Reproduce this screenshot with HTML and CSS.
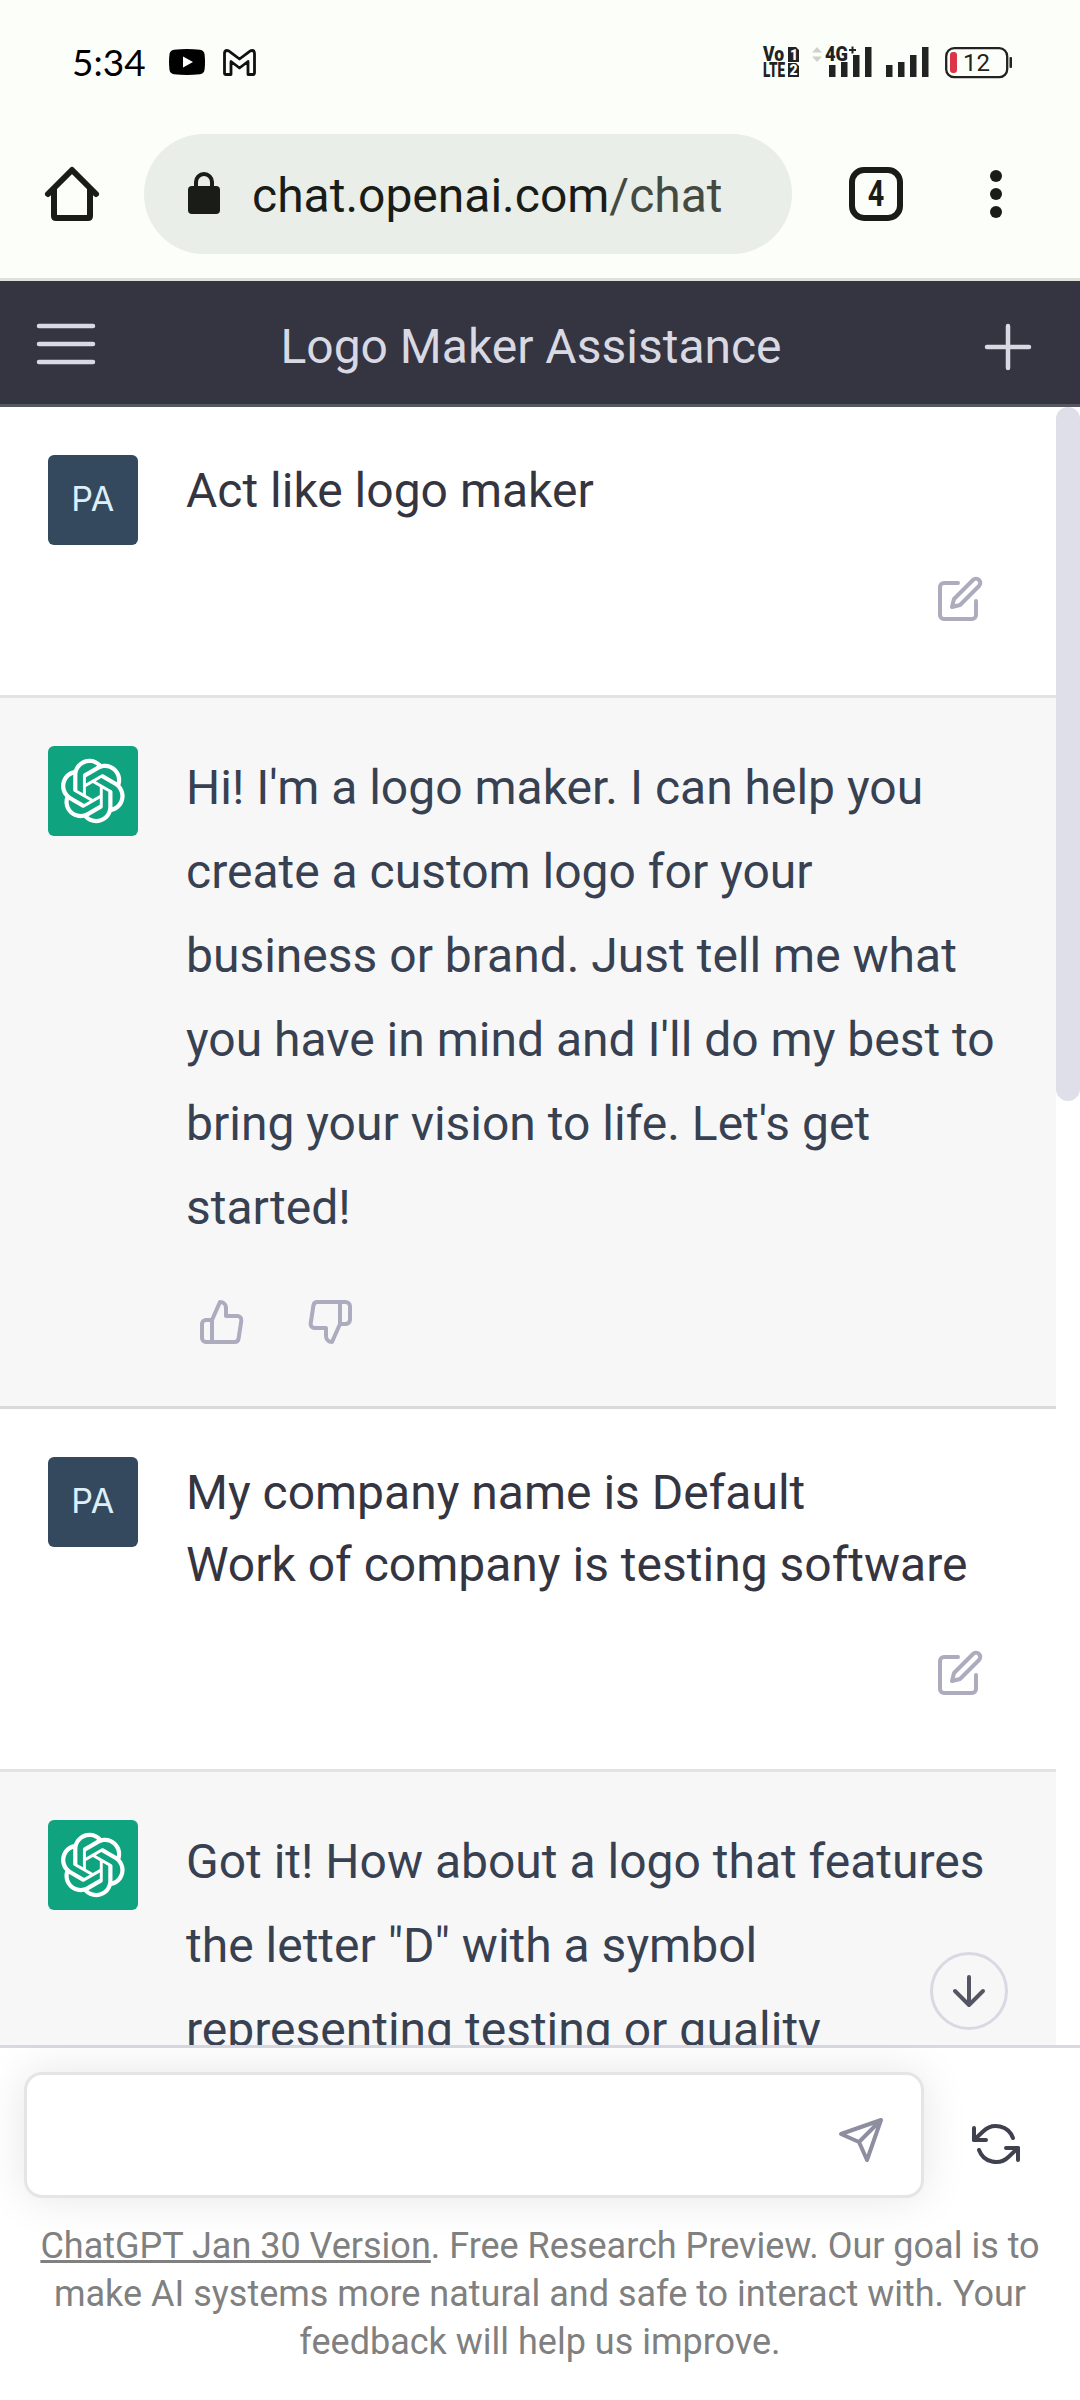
FILE: index.html
```html
<!DOCTYPE html>
<html lang="en">

<head>
    <meta charset="UTF-8">
    <meta name="viewport" content="width=device-width, initial-scale=1.0">
    <title>Logo Maker Assistance</title>
    <link rel="stylesheet" href="styles.css">
</head>

<body>
    <!-- Shared icons -->
    <svg class="sprite" aria-hidden="true">
        <symbol id="icon-edit" viewBox="0 0 24 24">
            <path d="M11 4H4a2 2 0 0 0-2 2v14a2 2 0 0 0 2 2h14a2 2 0 0 0 2-2v-7"/>
            <path d="M18.5 2.5a2.121 2.121 0 0 1 3 3L12 15l-4 1 1-4 9.5-9.5z"/>
        </symbol>
        <symbol id="icon-openai" viewBox="0 0 41 41">
            <path d="M37.5324 16.8707C37.9808 15.5241 38.1363 14.0974 37.9886 12.6859C37.8409 11.2744 37.3934 9.91076 36.676 8.68622C35.6126 6.83404 33.9882 5.3676 32.0373 4.4985C30.0864 3.62941 27.9098 3.40259 25.8215 3.85078C24.8796 2.7893 23.7219 1.94125 22.4257 1.36341C21.1295 0.785575 19.7249 0.491269 18.3058 0.500197C16.1708 0.495044 14.0893 1.16803 12.3614 2.42214C10.6335 3.67624 9.34853 5.44666 8.6917 7.47815C7.30085 7.76286 5.98686 8.3414 4.8377 9.17505C3.68854 10.0087 2.73073 11.0782 2.02839 12.312C0.956464 14.1591 0.498905 16.2988 0.721698 18.4228C0.944492 20.5467 1.83612 22.5449 3.268 24.1293C2.81966 25.4759 2.66413 26.9026 2.81182 28.3141C2.95951 29.7256 3.40701 31.0892 4.12437 32.3138C5.18791 34.1659 6.8123 35.6322 8.76321 36.5013C10.7141 37.3704 12.8907 37.5973 14.9789 37.1492C15.9208 38.2107 17.0786 39.0587 18.3747 39.6366C19.6709 40.2144 21.0755 40.5087 22.4946 40.4998C24.6307 40.5054 26.7133 39.8321 28.4418 38.5772C30.1704 37.3223 31.4556 35.5506 32.1119 33.5179C33.5027 33.2332 34.8167 32.6547 35.9659 31.821C37.115 30.9874 38.0728 29.9178 38.7752 28.684C39.8458 26.8371 40.3023 24.6979 40.0789 22.5748C39.8556 20.4517 38.9639 18.4544 37.5324 16.8707ZM22.4978 37.8849C20.7443 37.8874 19.0459 37.2733 17.6994 36.1501C17.7601 36.117 17.8666 36.0586 17.936 36.0161L25.9004 31.4156C26.1003 31.3019 26.2663 31.137 26.3813 30.9378C26.4964 30.7386 26.5563 30.5124 26.5549 30.2825V19.0542L29.9213 20.998C29.9389 21.0068 29.9541 21.0198 29.9656 21.0359C29.977 21.052 29.9842 21.0707 29.9867 21.0902V30.3889C29.9842 32.375 29.1946 34.2791 27.7909 35.6841C26.3872 37.0892 24.4838 37.8806 22.4978 37.8849ZM6.39227 31.0064C5.51397 29.4888 5.19742 27.7107 5.49804 25.9832C5.55718 26.0187 5.66048 26.0818 5.73461 26.1244L13.699 30.7248C13.8975 30.8408 14.1233 30.902 14.3532 30.902C14.583 30.902 14.8088 30.8408 15.0073 30.7248L24.731 25.1103V28.9979C24.7321 29.0177 24.7283 29.0376 24.7199 29.0556C24.7115 29.0736 24.6988 29.0893 24.6829 29.1012L16.6317 33.7497C14.9096 34.7416 12.8643 35.0097 10.9447 34.4954C9.02506 33.9811 7.38785 32.7263 6.39227 31.0064ZM4.29707 13.6194C5.17156 12.0998 6.55279 10.9364 8.19885 10.3327C8.19885 10.4013 8.19491 10.5228 8.19491 10.6071V19.808C8.19351 20.0378 8.25334 20.2638 8.36823 20.4629C8.48312 20.6619 8.64893 20.8267 8.84863 20.9404L18.5723 26.5542L15.206 28.4979C15.1894 28.5089 15.1703 28.5155 15.1505 28.5173C15.1307 28.5191 15.1107 28.516 15.0924 28.5082L7.04046 23.8557C5.32135 22.8601 4.06716 21.2235 3.55289 19.3046C3.03862 17.3858 3.30624 15.3413 4.29707 13.6194ZM31.955 20.0556L22.2312 14.4411L25.5976 12.4981C25.6142 12.4872 25.6333 12.4805 25.6531 12.4787C25.6729 12.4769 25.6928 12.4801 25.7111 12.4879L33.7631 17.1364C34.9967 17.849 36.0017 18.8982 36.6606 20.1613C37.3194 21.4244 37.6047 22.849 37.4832 24.2684C37.3617 25.6878 36.8382 27.0432 35.9743 28.1759C35.1103 29.3086 33.9415 30.1717 32.6047 30.6641C32.6047 30.5947 32.6047 30.4733 32.6047 30.3889V21.188C32.6066 20.9586 32.5474 20.7328 32.4332 20.5338C32.319 20.3348 32.154 20.1698 31.955 20.0556ZM35.3055 15.0128C35.2464 14.9765 35.1431 14.9142 35.069 14.8717L27.1045 10.2712C26.906 10.1554 26.6803 10.0943 26.4504 10.0943C26.2206 10.0943 25.9948 10.1554 25.7963 10.2712L16.0726 15.8858V11.9982C16.0715 11.9783 16.0753 11.9585 16.0837 11.9405C16.0921 11.9225 16.1048 11.9068 16.1207 11.8949L24.1719 7.25025C25.4053 6.53903 26.8158 6.19376 28.2383 6.25482C29.6608 6.31589 31.0364 6.78077 32.2044 7.59508C33.3723 8.40939 34.2842 9.53945 34.8334 10.8531C35.3826 12.1667 35.5464 13.6095 35.3055 15.0128ZM14.2424 21.9419L10.8752 19.9981C10.8576 19.9893 10.8423 19.9763 10.8309 19.9602C10.8195 19.9441 10.8122 19.9254 10.8098 19.9058V10.6071C10.8107 9.18295 11.2173 7.78848 11.9819 6.58696C12.7466 5.38544 13.8377 4.42659 15.1275 3.82264C16.4173 3.21869 17.8524 2.99464 19.2649 3.1767C20.6775 3.35876 22.0089 3.93941 23.1034 4.85067C23.0427 4.88379 22.937 4.94215 22.8668 4.98473L14.9024 9.58517C14.7025 9.69878 14.5366 9.86356 14.4215 10.0626C14.3065 10.2616 14.2466 10.4877 14.2479 10.7175L14.2424 21.9419ZM16.071 17.9991L20.4018 15.4978L24.7325 17.9975V22.9985L20.4018 25.4983L16.071 22.9985V17.9991Z"/>
        </symbol>
    </svg>

    <!-- Phone status bar -->
    <div class="status-bar">
        <span class="clock">5:34</span>
        <svg class="youtube" width="36" height="26" viewBox="0 0 36 26">
            <path d="M5 .8Q18-.6 31 .8 35 1.500 35.500 5 36.500 13 35.500 21 35 24.500 31 25.200 18 26.600 5 25.200 1 24.500.5 21-.5 13 .5 5 1 1.500 5 .8z"/>
            <path d="M14 7.500v11l10-5.500z" fill="#fff"/>
        </svg>
        <svg class="gmail" width="33" height="27" viewBox="0 0 33 27">
            <path d="M1.500 4.500Q1.500 1.500 4 1.500 5.500 1.500 7 2.800L16.500 10 26 2.800Q27.500 1.500 29 1.500 31.500 1.500 31.500 4.500V24Q31.500 25.500 30 25.500H25V12.500L16.500 19 8 12.500V25.500H3Q1.500 25.500 1.500 24z" fill="none" stroke="#111" stroke-width="2.800" stroke-linejoin="round"/>
        </svg>
        <div class="status-right">
            <svg class="volte" width="37" height="34" viewBox="0 0 37 34">
                <path d="M25 2h8l3 3v12H25zM25 18h8l3 3v11H25z"/>
                <text x="0" y="16" textLength="21" lengthAdjust="spacingAndGlyphs">Vo</text>
                <text x="0" y="32" textLength="22" lengthAdjust="spacingAndGlyphs">LTE</text>
                <text class="sim" x="27" y="14.500">1</text>
                <text class="sim" x="26.500" y="30">2</text>
            </svg>
            <svg class="signal-4g" width="60" height="34" viewBox="0 0 60 34">
                <path d="M0 7.500 5 2l5 5.500zM0 11.500h10L5 17z" fill="#cfd2cc"/>
                <text x="13" y="15.500" textLength="23" lengthAdjust="spacingAndGlyphs">4G</text>
                <path d="M37 5h7M40.500 1.500v7" stroke="#222" stroke-width="2"/>
                <path d="M17 20h6.500v12H17zM29 17h6.500v15H29zM41 10h6.500v22H41zM53 2h6.500v30H53z"/>
            </svg>
            <svg class="signal" width="44" height="34" viewBox="0 0 44 34">
                <path d="M0 20h6.500v12H0zM12 17h6.500v15H12zM24 10h6.500v22H24zM36 2h6.500v30H36z"/>
            </svg>
            <svg class="battery" width="68" height="34" viewBox="0 0 68 34">
                <rect x="1.200" y="3.200" width="61" height="29" rx="8" fill="none" stroke="#222" stroke-width="2.300"/>
                <rect x="5" y="7" width="7" height="21" rx="3" fill="#dd3448"/>
                <rect x="64.500" y="12" width="2.500" height="11" rx="1"/>
                <text x="18" y="26">12</text>
            </svg>
        </div>
    </div>

    <!-- Browser toolbar -->
    <div class="toolbar">
        <svg class="home" width="54" height="54" viewBox="0 0 54 54" fill="none" stroke="#1a1c17" stroke-width="6" stroke-linecap="round" stroke-linejoin="round">
            <path d="M3 27 27 3l24 24"/>
            <path d="M9 23v26q0 2 2 2h32q2 0 2-2V23"/>
        </svg>
        <div class="address">
            <svg class="lock" width="32" height="42" viewBox="0 0 32 42">
                <rect y="14" width="32" height="28" rx="4"/>
                <path d="M8 16v-6a8 8 0 0 1 16 0v6" fill="none" stroke="#1a1c17" stroke-width="4"/>
            </svg>
            <span class="url">chat.openai.com<span class="url-path">/chat</span></span>
        </div>
        <div class="tabs"><span class="tab-count">4</span></div>
        <svg class="more" width="12" height="48" viewBox="0 0 12 48">
            <circle cx="6" cy="6" r="6"/>
            <circle cx="6" cy="24" r="6"/>
            <circle cx="6" cy="42" r="6"/>
        </svg>
    </div>

    <header class="page-header">
        <svg width="72" height="72" viewBox="0 0 24 24">
            <path d="M3 6h18M3 12h18M3 18h18"/>
        </svg>
        <h1>Logo Maker Assistance</h1>
        <svg class="new-chat" width="72" height="72" viewBox="0 0 24 24">
            <path d="M12 5v14M5 12h14"/>
        </svg>
    </header>

    <main class="chat">
        <div class="messages">
            <div class="message user">
                <div class="avatar">PA</div>
                <div class="content">
                    <p>Act like logo maker</p>
                    <div class="actions"><svg class="icon"><use href="#icon-edit"/></svg></div>
                </div>
            </div>
            <div class="message bot">
                <div class="avatar"><svg class="logo"><use href="#icon-openai"/></svg></div>
                <div class="content">
                    <p>Hi! I'm a logo maker. I can help you<br>create a custom logo for your<br>business or brand. Just tell me what<br>you have in mind and I'll do my best to<br>bring your vision to life. Let's get<br>started!</p>
                    <div class="actions">
                        <svg class="icon" viewBox="0 0 24 24"><path d="M14 9V5a3 3 0 0 0-3-3l-4 9v11h11.280a2 2 0 0 0 2-1.700l1.380-9a2 2 0 0 0-2-2.300zM7 22H4a2 2 0 0 1-2-2v-7a2 2 0 0 1 2-2h3"/></svg>
                        <svg class="icon" viewBox="0 0 24 24"><path d="M10 15v4a3 3 0 0 0 3 3l4-9V2H5.720a2 2 0 0 0-2 1.700l-1.380 9a2 2 0 0 0 2 2.300zm7-13h2.670A2.310 2.310 0 0 1 22 4v7a2.310 2.310 0 0 1-2.330 2H17"/></svg>
                    </div>
                </div>
            </div>
            <div class="message user">
                <div class="avatar">PA</div>
                <div class="content">
                    <p>My company name is Default<br>Work of company is testing software</p>
                    <div class="actions"><svg class="icon"><use href="#icon-edit"/></svg></div>
                </div>
            </div>
            <div class="message bot">
                <div class="avatar"><svg class="logo"><use href="#icon-openai"/></svg></div>
                <div class="content">
                    <p>Got it! How about a logo that features<br>the letter "D" with a symbol<br>representing testing or quality</p>
                </div>
            </div>
        </div>
        <div class="scrollbar"><div class="thumb"></div></div>
        <button class="scroll-down">
            <svg class="icon" viewBox="0 0 24 24"><path d="M12 5v14M19 12l-7 7-7-7"/></svg>
        </button>
    </main>

    <footer class="composer">
        <form class="prompt-row">
            <div class="prompt">
                <svg class="icon" viewBox="0 0 24 24"><path d="M22 2 11 13M22 2l-7 20-4-9-9-4z"/></svg>
            </div>
            <svg class="icon refresh" viewBox="0 0 24 24">
                <path d="M1 4v6h6M23 20v-6h-6"/>
                <path d="M20.490 9A9 9 0 0 0 5.640 5.640L1 10m22 4-4.640 4.360A9 9 0 0 1 3.510 15"/>
            </svg>
        </form>
        <p class="note"><a href="#">ChatGPT Jan 30 Version</a>. Free Research Preview. Our goal is to<br>make AI systems more natural and safe to interact with. Your<br>feedback will help us improve.</p>
    </footer>
</body>

</html>
```
FILE: styles.css
```css
* {
    box-sizing: border-box;
}

body {
    margin: 0;
    height: 2400px;
    display: flex;
    flex-direction: column;
    overflow: hidden;
    background-color: #fff;
    font-family: Roboto, "Liberation Sans", sans-serif;
    font-size: 48px;
}

p, h1 {
    margin: 0;
}

svg {
    flex: none;
    display: block;
}

.sprite {
    position: absolute;
    width: 0;
    height: 0;
}

/* Status bar */
.status-bar {
    height: 124px;
    flex: none;
    display: flex;
    align-items: center;
    padding: 0 67px 0 72px;
    background-color: #fcfff9;
    fill: #222;
}

.clock {
    width: 97px;
    font-family: Lato, sans-serif;
    font-size: 37px;
    line-height: 40px;
    color: #000;
}

.youtube {
    margin-right: 18px;
    fill: #000;
}

.status-right {
    display: flex;
    margin-left: auto;
}

.status-right svg {
    overflow: visible;
}

.status-right text {
    font-family: Roboto, sans-serif;
    font-weight: 900;
    font-size: 20px;
}

.status-right .sim {
    font-size: 14px;
    fill: #fff;
}

.status-right .battery text {
    font-weight: 400;
    font-size: 24px;
}

.volte {
    margin-right: 12px;
}

.signal-4g {
    margin-right: 14px;
}

.signal {
    margin-right: 15px;
}

/* Browser toolbar */
.toolbar {
    height: 157px;
    flex: none;
    display: flex;
    align-items: center;
    padding: 10px 78px 24px 45px;
    background-color: #fcfff9;
    border-bottom: 3px solid #dde2dc;
    color: #1a1c17;
    fill: #1a1c17;
}

.address {
    width: 648px;
    height: 120px;
    margin-left: 45px;
    padding-left: 44px;
    display: flex;
    align-items: center;
    gap: 32px;
    border-radius: 60px;
    background-color: #e9eee8;
}

.lock {
    margin-top: -3px;
}

.url {
    padding-top: 2px;
}

.url-path {
    color: #444941;
}

.tabs {
    width: 54px;
    height: 54px;
    margin-left: 57px;
    border: 6px solid #1a1c17;
    border-radius: 15px;
    font-size: 36px;
    font-weight: 700;
    line-height: 43px;
    text-align: center;
}

.tab-count {
    display: block;
    transform: scaleX(0.8);
}

.more {
    margin-left: auto;
}

.more, .home {
    overflow: visible;
}

/* Chat header */
.page-header {
    height: 126px;
    flex: none;
    display: flex;
    align-items: center;
    justify-content: space-between;
    padding: 3px 36px 0 30px;
    background-color: #343541;
    border-bottom: 3px solid #565761;
    color: #d9d9e3;
}

.page-header h1 {
    margin: 4px 12px 0 0;
    font-size: 48px;
    font-weight: 400;
}

.page-header svg {
    fill: none;
    stroke: #d9d9e3;
    stroke-width: 1.5;
    stroke-linecap: round;
}

.new-chat {
    margin-top: 6px;
}

/* Conversation */
.chat {
    position: relative;
    height: 1638px;
    flex: none;
    display: flex;
    overflow: hidden;
}

.messages {
    flex: 1;
}

.message {
    display: flex;
    gap: 48px;
    padding: 48px 72px 72px 48px;
    border-bottom: 3px solid #e3e3e3;
    line-height: 72px;
    color: #343541;
}

.message.bot {
    padding-right: 0;
    padding-bottom: 60px;
    background-color: #f7f7f8;
    border-color: #d9d9d9;
    line-height: 84px;
    color: #374151;
}

.avatar {
    width: 90px;
    height: 90px;
    flex: none;
    display: flex;
    align-items: center;
    justify-content: center;
    padding-bottom: 2px;
    border-radius: 6px;
    background-color: #34495e;
    font-family: Inter, sans-serif;
    font-size: 34px;
    letter-spacing: 0.5px;
    color: #deeffc;
}

.bot .avatar {
    padding: 0;
    background-color: #10a37f;
}

.logo {
    width: 66px;
    height: 66px;
    fill: #fff;
}

.content {
    flex: 1;
    white-space: nowrap;
}

.icon {
    width: 48px;
    height: 48px;
    fill: none;
    stroke: #acacbe;
    stroke-width: 2;
    stroke-linecap: round;
    stroke-linejoin: round;
}

.actions {
    display: flex;
    justify-content: flex-end;
    margin-top: 48px;
}

.bot .actions {
    justify-content: flex-start;
    gap: 60px;
    padding-left: 12px;
}

.scrollbar {
    width: 24px;
    background-color: #fff;
}

.thumb {
    height: 694px;
    border-radius: 12px;
    background-color: #dfdfe9;
}

/* Floats over the last message */
.scroll-down {
    position: absolute;
    right: 72px;
    bottom: 15px;
    width: 78px;
    height: 78px;
    padding: 12px;
    border: 3px solid #d9d9e3;
    border-radius: 50%;
    background-color: #f7f7f8;
}

.scroll-down .icon {
    stroke: #555663;
}

/* Prompt and footnote */
.composer {
    flex: 1;
    padding: 24px 24px 0;
    border-top: 3px solid #d9d9e3;
}

.prompt-row {
    display: flex;
    align-items: center;
}

.prompt {
    width: 900px;
    height: 126px;
    display: flex;
    align-items: center;
    justify-content: flex-end;
    padding: 9px 36px 0 0;
    border: 3px solid #e5e5e5;
    border-radius: 18px;
    background-color: #fff;
    box-shadow: 0 0 45px rgba(0, 0, 0, 0.1);
}

.prompt .icon {
    stroke: #8e8ea0;
}

.refresh {
    margin: 18px 0 0 48px;
    stroke: #40414f;
}

.note {
    margin: 24px -24px 0;
    text-align: center;
    font-size: 36px;
    line-height: 48px;
    color: #808080;
}

.note a {
    color: inherit;
}
```
